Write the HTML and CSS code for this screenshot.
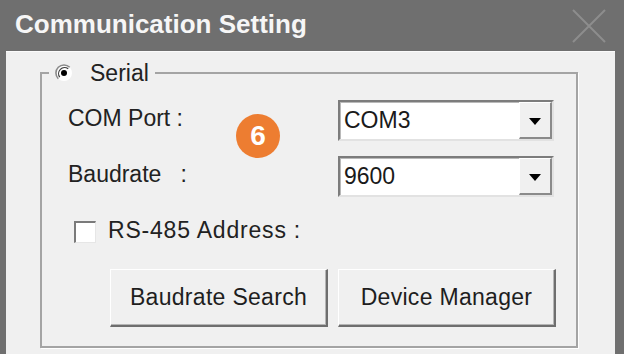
FILE: index.html
```html
<!DOCTYPE html>
<html>
<head>
<meta charset="utf-8">
<link rel="stylesheet" href="styles.css">
</head>
<body>
<div class="window">
  <div class="titlebar">
    <span class="title">Communication Setting</span>
    <svg class="close" width="34" height="34" viewBox="0 0 34 34"><path d="M1 1 L33 33 M33 1 L1 33" stroke="#8d8d8d" stroke-width="2" fill="none"/></svg>
  </div>
  <div class="client">
    <fieldset class="group">
      <legend class="legend">
        <svg class="radio" width="18" height="18" viewBox="0 0 18 18">
          <circle cx="9" cy="9" r="8" fill="#fff"/>
          <path d="M3.3 14.7 A8 8 0 0 1 14.7 3.3" stroke="#8a8a8a" stroke-width="1.6" fill="none"/>
          <path d="M4.8 13.2 A6 6 0 0 1 13.2 4.8" stroke="#404040" stroke-width="1.2" fill="none"/>
          <circle cx="9" cy="9" r="3" fill="#000"/>
        </svg>
        <span>Serial</span>
      </legend>
      <div class="row first">
        <span class="label">COM Port :</span>
        <div class="combo"><span class="value">COM3</span><span class="drop"><span class="arrow"></span></span></div>
      </div>
      <div class="row second">
        <span class="label">Baudrate&nbsp;&nbsp;&nbsp;:</span>
        <div class="combo"><span class="value">9600</span><span class="drop"><span class="arrow"></span></span></div>
      </div>
      <div class="check-row">
        <span class="checkbox"></span>
        <span class="check-label">RS-485 Address :</span>
      </div>
      <div class="buttons">
        <div class="btn">Baudrate Search</div>
        <div class="btn">Device Manager</div>
      </div>
    </fieldset>
    <div class="badge">6</div>
  </div>
</div>
</body>
</html>
```

FILE: styles.css
```css
html, body {
  margin: 0;
  padding: 0;
}
body {
  width: 624px;
  height: 354px;
  overflow: hidden;
  background: #6f6f6f;
  font-family: "Liberation Sans", Arial, sans-serif;
}
.window {
  width: 624px;
  height: 354px;
}
.titlebar {
  height: 51px;
  box-sizing: border-box;
  padding: 11px 18px 0 15px;
  display: flex;
  justify-content: space-between;
  align-items: flex-start;
}
.title {
  font-size: 26px;
  line-height: 26px;
  font-weight: bold;
  color: #f6f6f6;
}
.close {
  margin-top: -2px;
  display: block;
}
.client {
  position: relative;
  margin-left: 6px;
  width: 609px;
  height: 303px;
  box-sizing: border-box;
  background: #f0f0f0;
  border-top: 1px solid #fbfbfb;
  padding-top: 8px;
  color: #222;
  font-size: 23px;
}
.group {
  margin: 0 37px 0 34px;
  padding: 0 0 19px 26px;
  border: 2px solid #a4a4a4;
  box-shadow: 1px 1px 0 #fff;
  height: 288px;
  box-sizing: border-box;
  min-inline-size: 0;
}
.legend {
  margin-left: -19px;
  padding: 0 6px;
  height: 26px;
  line-height: 26px;
  display: flex;
  align-items: center;
  gap: 17px;
}
.legend span {
  line-height: 26px;
}
.radio {
  display: block;
}
.row {
  display: flex;
  align-items: center;
  height: 41px;
}
.row.first {
  margin-top: 14px;
}
.row.second {
  margin-top: 15px;
}
.label {
  width: 270px;
  line-height: 23px;
  margin-bottom: 5px;
}
.combo {
  width: 216px;
  height: 41px;
  box-sizing: border-box;
  background: #fff;
  border-top: 2px solid #7c7c7c;
  border-left: 2px solid #7c7c7c;
  border-right: 2px solid #e2e2e2;
  border-bottom: 2px solid #e2e2e2;
  box-shadow: inset 1px 1px 0 #b9b9b9;
  display: flex;
  align-items: stretch;
}
.value {
  flex: 1;
  padding-left: 4px;
  line-height: 37px;
  color: #1a1a1a;
}
.drop {
  width: 33px;
  background: #f0f0f0;
  box-sizing: border-box;
  border-right: 2px solid #8a8a8a;
  border-bottom: 2px solid #8a8a8a;
  border-top: 1px solid #fff;
  border-left: 1px solid #fff;
  display: flex;
  align-items: center;
  justify-content: center;
}
.arrow {
  width: 0;
  height: 0;
  border-left: 6px solid transparent;
  border-right: 6px solid transparent;
  border-top: 7px solid #000;
  margin-top: 3px;
}
.check-row {
  display: flex;
  align-items: center;
  height: 24px;
  margin-top: 23px;
  margin-left: 6px;
  gap: 12px;
}
.checkbox {
  width: 22px;
  height: 22px;
  box-sizing: border-box;
  background: #fff;
  border-top: 2px solid #7a7a7a;
  border-left: 2px solid #7a7a7a;
  border-right: 1px solid #e6e6e6;
  border-bottom: 1px solid #e6e6e6;
}
.check-label {
  line-height: 23px;
  margin-bottom: 4px;
  letter-spacing: 0.8px;
}
.buttons {
  display: flex;
  gap: 10px;
  margin-top: 25px;
  margin-left: 42px;
}
.btn {
  width: 218px;
  height: 58px;
  box-sizing: border-box;
  background: #f0f0f0;
  border-top: 1px solid #fff;
  border-left: 1px solid #fff;
  border-right: 2px solid #6e6e6e;
  border-bottom: 2px solid #6e6e6e;
  box-shadow: inset -1px -1px 0 #b5b5b5;
  display: flex;
  align-items: center;
  justify-content: center;
  color: #1e1e1e;
  letter-spacing: 0.3px;
}
.badge {
  position: absolute;
  left: 230px;
  top: 62px;
  width: 44px;
  height: 44px;
  border-radius: 50%;
  background: #ed7d31;
  color: #fff;
  font-weight: bold;
  font-size: 28px;
  line-height: 44px;
  text-align: center;
}
```
